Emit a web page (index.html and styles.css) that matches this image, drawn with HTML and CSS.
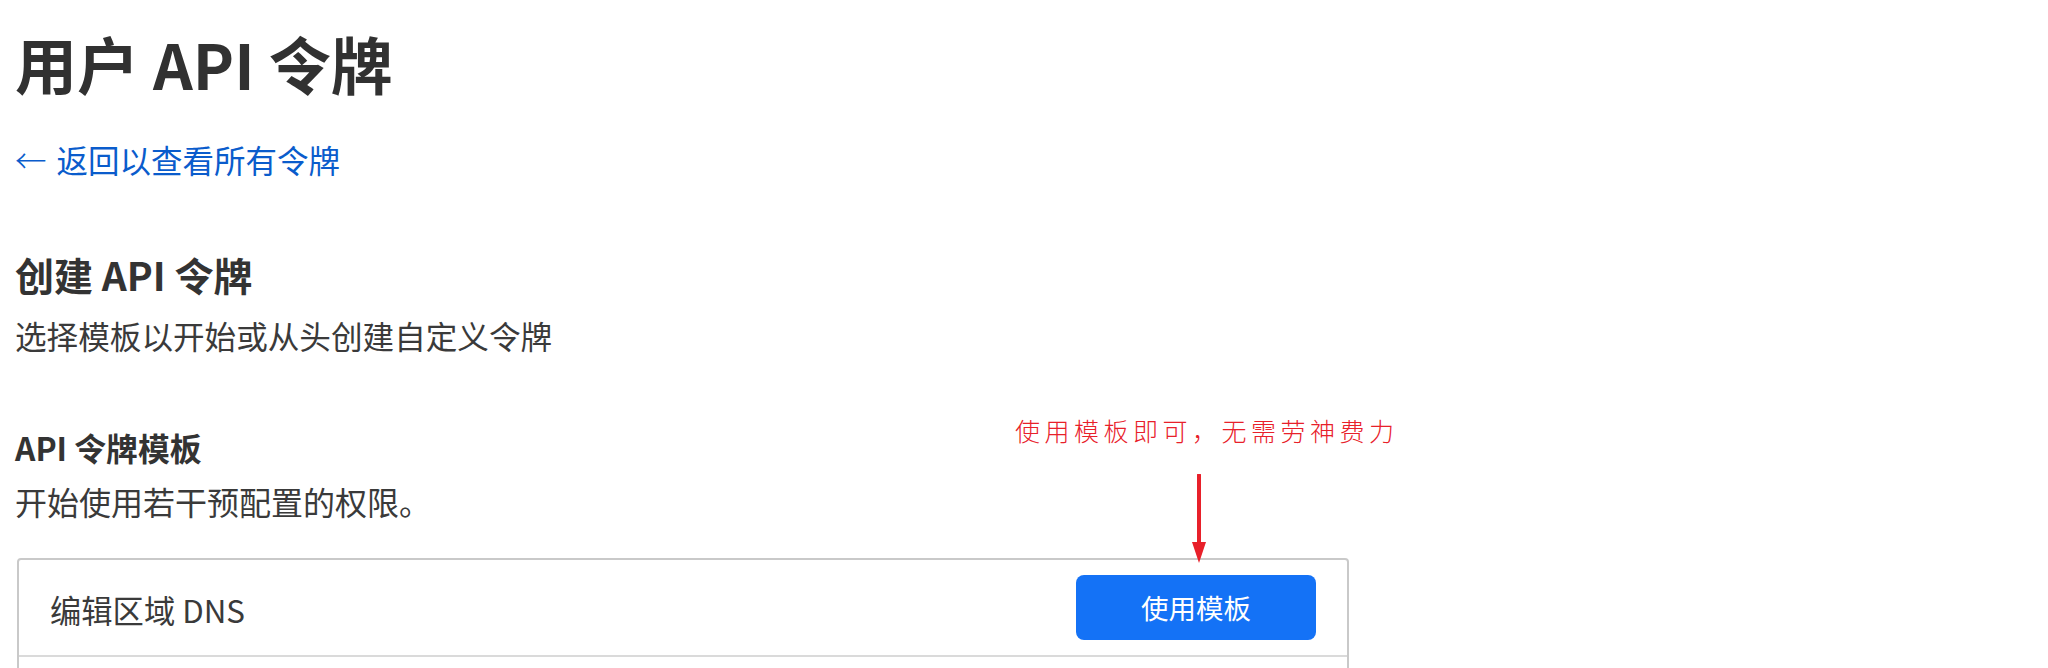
FILE: index.html
```html
<!DOCTYPE html>
<html lang="zh-CN">
<head>
<meta charset="utf-8">
<title>用户 API 令牌</title>
<link rel="stylesheet" href="styles.css">
</head>
<body>
<main class="page">
  <h1 class="title">用户 API 令牌</h1>
  <a class="back" href="#"><span class="back-arrow">←</span>返回以查看所有令牌</a>

  <section class="create">
    <h2 class="h2">创建 API 令牌</h2>
    <p class="sub">选择模板以开始或从头创建自定义令牌</p>
  </section>

  <section class="templates">
    <h3 class="h3">API 令牌模板</h3>
    <p class="sub sub-tight">开始使用若干预配置的权限。</p>

    <div class="card">
      <div class="row">
        <span class="row-name">编辑区域 DNS</span>
        <button class="btn">使用模板</button>
      </div>
      <div class="row row-empty"></div>
    </div>
  </section>

  <div class="note">使用模板即可，无需劳神费力</div>
  <svg class="arrow" width="16" height="90" viewBox="0 0 16 90" aria-hidden="true">
    <line x1="8" y1="1" x2="8" y2="72" stroke="#e8202a" stroke-width="4" stroke-linecap="round"/>
    <polygon points="1,68 15,68 8,89" fill="#e8202a"/>
  </svg>
</main>
</body>
</html>
```

FILE: styles.css
```css
* { box-sizing: border-box; }
html, body { margin: 0; padding: 0; background: #fff; }
body {
  font-family: "Noto Sans CJK SC", "Noto Sans", "Liberation Sans", sans-serif;
  color: #363636;
}
.page {
  position: relative;
  padding: 25px 0 0 15px;
  display: flex;
  flex-direction: column;
  align-items: flex-start;
}
.title {
  margin: 0;
  font-size: 62px;
  line-height: 76px;
  font-weight: 600;
  color: #313131;
}
.back {
  margin-top: 38px;
  font-size: 31.5px;
  line-height: 40px;
  color: #0a5ccc;
  text-decoration: none;
}
.back-arrow {
  display: inline-block;
  margin-right: 10px;
  font-weight: 300;
}
.create, .templates {
  display: flex;
  flex-direction: column;
  align-items: flex-start;
}
.create { margin-top: 70px; }
.h2 {
  margin: 0;
  font-size: 39px;
  line-height: 50px;
  font-weight: 700;
  color: #333;
}
.sub {
  margin: 15px 0 0;
  font-size: 31.6px;
  line-height: 42px;
  color: #3a3a3a;
}
.sub-tight { margin-top: 12px; font-size: 32px; }
.templates { margin-top: 70px; }
.h3 {
  margin: 0;
  font-size: 31.8px;
  line-height: 42px;
  font-weight: 700;
  color: #333;
}
.card {
  margin-top: 36px;
  margin-left: 2px;
  width: 1332px;
  border: 2px solid #c9c9c9;
  border-radius: 4px;
}
.row {
  display: flex;
  align-items: center;
  justify-content: space-between;
  padding: 15px 31px 15px 31px;
  border-bottom: 2px solid #dadada;
}
.row-empty { height: 97px; }
.row-name {
  font-size: 31.3px;
  line-height: 42px;
  color: #3a3a3a;
  margin-top: 4px;
}
.btn {
  width: 240px;
  height: 65px;
  border: 0;
  border-radius: 8px;
  background: #1472f6;
  color: #fff;
  font-family: inherit;
  font-size: 27.5px;
  line-height: 1;
}
.note {
  position: absolute;
  left: 1015px;
  top: 412px;
  font-size: 25px;
  line-height: 36px;
  letter-spacing: 4.5px;
  font-weight: 300;
  color: #e8202a;
  white-space: nowrap;
}
.arrow {
  position: absolute;
  left: 1191px;
  top: 474px;
}
```
